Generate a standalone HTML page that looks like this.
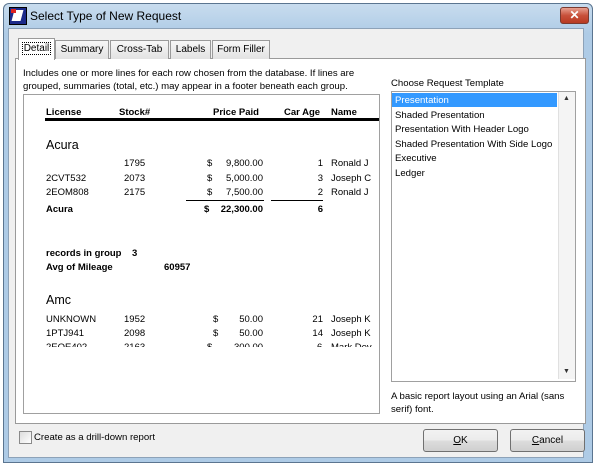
<!DOCTYPE html>
<html><head><style>
body{margin:0;width:600px;height:466px;background:#fff;font-family:"Liberation Sans",Arial,sans-serif;font-size:10px;color:#000;position:relative;overflow:hidden}
.a{position:absolute;white-space:nowrap}
.win{position:absolute;left:3px;top:3px;width:588px;height:458px;border:1px solid #5b7590;border-radius:6px 6px 0 0;background:linear-gradient(#c8dcee,#aecbe6 30px);}
.client{position:absolute;left:8px;top:28px;width:574px;height:428px;background:#f0f0f0;border:1px solid #8da2b8}
.tab{position:absolute;top:40px;height:18px;background:linear-gradient(#f7f7f7,#e2e2e2);border:1px solid #9a9a9a;border-bottom:none;line-height:17px;text-align:center;font-size:10px}
.panel{position:absolute;left:15px;top:58px;width:569px;height:364px;background:#fff;border:1px solid #9a9a9a}
.b{font-weight:bold}
.btn{position:absolute;top:429px;height:21px;border:1px solid #707070;border-radius:3px;background:linear-gradient(#f2f2f2,#ebebeb 50%,#dddddd 50%,#cfcfcf);text-align:center;line-height:21px}
.r{text-align:right}
</style></head><body>
<div class="win"></div>
<div class="a" style="left:9px;top:7px;width:16px;height:16px;background:#1c2a8a;border:1px solid #000"><div style="position:absolute;left:3px;top:2px;width:9px;height:11px;background:#fff;transform:skew(-15deg)"></div><div style="position:absolute;left:1px;top:1px;width:5px;height:4px;background:#d22"></div></div>
<div class="a" style="left:30px;top:9px;font-size:12px;color:#000">Select Type of New Request</div>
<div class="a" style="left:560px;top:7px;width:27px;height:15px;border:1px solid #7a3a30;border-radius:3px;background:linear-gradient(#e8a090,#c8503a 50%,#b83a22);color:#fff;font-weight:bold;text-align:center;line-height:14px;font-size:12px">✕</div>
<div class="client"></div>
<div class="panel"></div>
<div class="tab" style="left:18px;top:38px;width:35px;height:21px;background:#fff;z-index:2;line-height:20px"><span style="border:1px dotted #000;padding:0 1px">Detail</span></div>
<div class="tab" style="left:55px;width:52px">Summary</div>
<div class="tab" style="left:110px;width:57px">Cross-Tab</div>
<div class="tab" style="left:170px;width:39px">Labels</div>
<div class="tab" style="left:212px;width:56px">Form Filler</div>
<div class="a" style="left:23px;top:67px;line-height:13px;font-size:9.6px">Includes one or more lines for each row chosen from the database. If lines are<br>grouped, summaries (total, etc.) may appear in a footer beneath each group.</div>
<div class="a" style="left:23px;top:94px;width:355px;height:318px;border:1px solid #a0a0a0;overflow:hidden;background:#fff">
 <div style="position:relative;left:-23px;top:-94px;width:400px;height:420px;font-family:'Liberation Sans',Arial,sans-serif;font-size:9.5px">
 <div class="a b" style="left:45px;top:106px">License</div>
 <div class="a b" style="left:118px;top:106px">Stock#</div>
 <div class="a b" style="left:212px;top:106px">Price Paid</div>
 <div class="a b" style="left:283px;top:106px">Car Age</div>
 <div class="a b" style="left:330px;top:106px">Name</div>
 <div class="a" style="left:44px;top:117px;width:340px;height:3px;background:#000"></div>
 <div class="a" style="left:45px;top:137px;font-size:12.5px">Acura</div>
 <div class="a" style="left:123px;top:157px">1795</div><div class="a" style="left:206px;top:157px">$</div><div class="a r" style="left:210px;top:157px;width:52px">9,800.00</div><div class="a r" style="left:300px;top:157px;width:22px">1</div><div class="a" style="left:330px;top:157px">Ronald J</div>
 <div class="a" style="left:45px;top:172px">2CVT532</div><div class="a" style="left:123px;top:172px">2073</div><div class="a" style="left:206px;top:172px">$</div><div class="a r" style="left:210px;top:172px;width:52px">5,000.00</div><div class="a r" style="left:300px;top:172px;width:22px">3</div><div class="a" style="left:330px;top:172px">Joseph C</div>
 <div class="a" style="left:45px;top:186px">2EOM808</div><div class="a" style="left:123px;top:186px">2175</div><div class="a" style="left:206px;top:186px">$</div><div class="a r" style="left:210px;top:186px;width:52px">7,500.00</div><div class="a r" style="left:300px;top:186px;width:22px">2</div><div class="a" style="left:330px;top:186px">Ronald J</div>
 <div class="a" style="left:185px;top:199px;width:78px;height:1px;background:#000"></div>
 <div class="a" style="left:270px;top:199px;width:52px;height:1px;background:#000"></div>
 <div class="a b" style="left:45px;top:203px">Acura</div><div class="a b" style="left:203px;top:203px">$</div><div class="a b r" style="left:210px;top:203px;width:52px">22,300.00</div><div class="a b r" style="left:300px;top:203px;width:22px">6</div>
 <div class="a b" style="left:45px;top:247px">records in group&nbsp;&nbsp;&nbsp;&nbsp;3</div>
 <div class="a b" style="left:45px;top:261px">Avg of Mileage</div><div class="a b" style="left:163px;top:261px">60957</div>
 <div class="a" style="left:45px;top:292px;font-size:12.5px">Amc</div>
 <div class="a" style="left:45px;top:313px">UNKNOWN</div><div class="a" style="left:123px;top:313px">1952</div><div class="a" style="left:212px;top:313px">$</div><div class="a r" style="left:210px;top:313px;width:52px">50.00</div><div class="a r" style="left:300px;top:313px;width:22px">21</div><div class="a" style="left:330px;top:313px">Joseph K</div>
 <div class="a" style="left:45px;top:327px">1PTJ941</div><div class="a" style="left:123px;top:327px">2098</div><div class="a" style="left:212px;top:327px">$</div><div class="a r" style="left:210px;top:327px;width:52px">50.00</div><div class="a r" style="left:300px;top:327px;width:22px">14</div><div class="a" style="left:330px;top:327px">Joseph K</div>
 <div class="a" style="left:45px;top:341px;height:5px;overflow:hidden;width:340px"><span style="position:absolute;left:0">2EOE402</span><span style="position:absolute;left:78px">2163</span><span style="position:absolute;left:161px">$</span><span style="position:absolute;left:188px">300.00</span><span style="position:absolute;left:271px">6</span><span style="position:absolute;left:285px">Mark Dev</span></div>
 </div>
</div>
<div class="a" style="left:391px;top:78px;font-size:9.6px">Choose Request Template</div>
<div class="a" style="left:391px;top:91px;width:183px;height:289px;border:1px solid #a0a0a0;background:#fff"></div>
<div class="a" style="left:558px;top:92px;width:16px;height:287px;background:#f4f4f4;border-left:1px solid #e0e0e0"></div>
<div class="a" style="left:563px;top:95px;font-size:7px;color:#333">▲</div>
<div class="a" style="left:563px;top:368px;font-size:7px;color:#333">▼</div>
<div class="a" style="left:392px;top:93px;width:165px;height:14px;background:#3399ff"></div>
<div class="a" style="left:395px;top:94px;line-height:14.6px;font-size:9.6px">
<span style="color:#fff">Presentation</span><br>Shaded Presentation<br>Presentation With Header Logo<br>Shaded Presentation With Side Logo<br>Executive<br>Ledger</div>
<div class="a" style="left:391px;top:390px;line-height:13px;font-size:9.6px">A basic report layout using an Arial (sans<br>serif) font.</div>
<div class="a" style="left:19px;top:431px;width:11px;height:11px;border:1px solid #8a8a8a;background:linear-gradient(135deg,#ddd,#fff)"></div>
<div class="a" style="left:34px;top:432px;font-size:9.6px">Create as a drill-down report</div>
<div class="btn" style="left:423px;width:73px"><u>O</u>K</div>
<div class="btn" style="left:510px;width:73px"><u>C</u>ancel</div>
</body></html>
